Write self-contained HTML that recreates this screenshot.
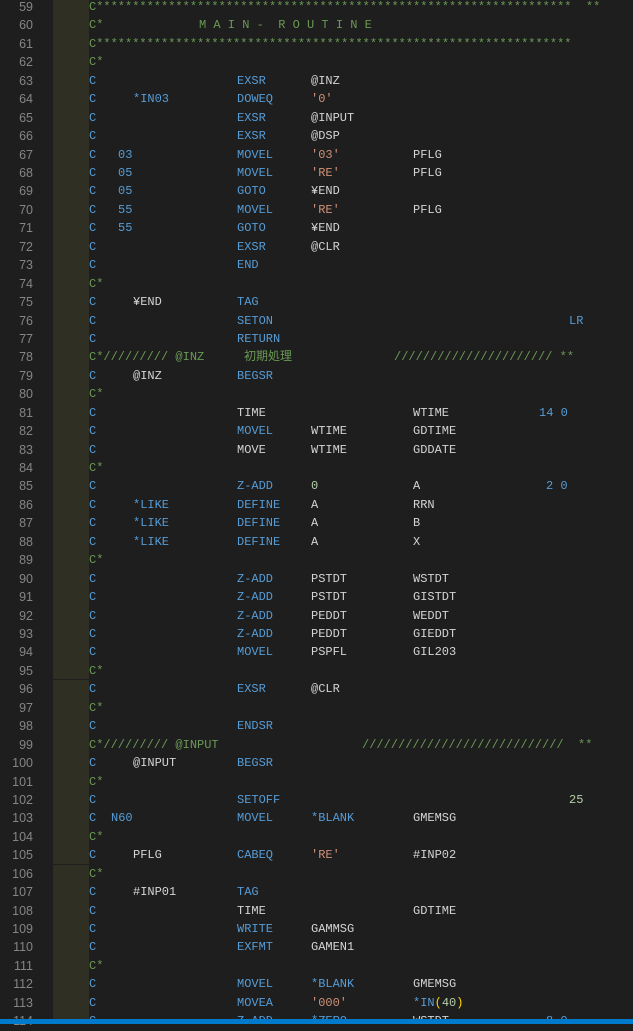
<!DOCTYPE html>
<html><head><meta charset="utf-8"><style>
body{margin:0;width:633px;height:1024px;background:#1e1e1e;overflow:hidden;position:relative;font-family:"Liberation Mono","Noto Sans CJK JP",monospace;font-size:12px}
.band{position:absolute;left:53px;top:0;width:36px;height:1020px;background:#2f2f24}
.sep{position:absolute;left:53px;width:36px;height:1px;background:#1e1e1e}
.l{position:absolute;left:0;height:18.44px;line-height:18.44px;width:633px;white-space:pre}
.l span{position:absolute;top:0}
.n{left:0;width:33px;text-align:right;color:#858585;font-family:"Liberation Sans",sans-serif;font-size:12.5px}
.b{color:#569cd6}.g{color:#6a9955}.w{color:#d4d4d4}.s{color:#ce9178}.y{color:#ffd700}.k{color:#b5cea8}
.bar{position:absolute;left:0;top:1019px;width:633px;height:5px;background:#007acc}
</style></head><body>
<div class="band"></div>
<div class="sep" style="top:679px"></div>
<div class="sep" style="top:864px"></div>
<div class="l" style="top:-2px"><span class="n">59</span><span class="g" style="left:89px">C******************************************************************  **</span></div>
<div class="l" style="top:16.4px"><span class="n">60</span><span class="g" style="left:89px">C*</span><span class="g" style="left:199px">M A I N -  R O U T I N E</span></div>
<div class="l" style="top:34.9px"><span class="n">61</span><span class="g" style="left:89px">C******************************************************************</span></div>
<div class="l" style="top:53.3px"><span class="n">62</span><span class="g" style="left:89px">C*</span></div>
<div class="l" style="top:71.8px"><span class="n">63</span><span class="b" style="left:89px">C</span><span class="b" style="left:237px">EXSR</span><span class="w" style="left:311px">@INZ</span></div>
<div class="l" style="top:90.2px"><span class="n">64</span><span class="b" style="left:89px">C</span><span class="b" style="left:133px">*IN03</span><span class="b" style="left:237px">DOWEQ</span><span class="s" style="left:311px">'0'</span></div>
<div class="l" style="top:108.6px"><span class="n">65</span><span class="b" style="left:89px">C</span><span class="b" style="left:237px">EXSR</span><span class="w" style="left:311px">@INPUT</span></div>
<div class="l" style="top:127.1px"><span class="n">66</span><span class="b" style="left:89px">C</span><span class="b" style="left:237px">EXSR</span><span class="w" style="left:311px">@DSP</span></div>
<div class="l" style="top:145.5px"><span class="n">67</span><span class="b" style="left:89px">C</span><span class="b" style="left:118px">03</span><span class="b" style="left:237px">MOVEL</span><span class="s" style="left:311px">'03'</span><span class="w" style="left:413px">PFLG</span></div>
<div class="l" style="top:164px"><span class="n">68</span><span class="b" style="left:89px">C</span><span class="b" style="left:118px">05</span><span class="b" style="left:237px">MOVEL</span><span class="s" style="left:311px">'RE'</span><span class="w" style="left:413px">PFLG</span></div>
<div class="l" style="top:182.4px"><span class="n">69</span><span class="b" style="left:89px">C</span><span class="b" style="left:118px">05</span><span class="b" style="left:237px">GOTO</span><span class="w" style="left:311px">¥END</span></div>
<div class="l" style="top:200.8px"><span class="n">70</span><span class="b" style="left:89px">C</span><span class="b" style="left:118px">55</span><span class="b" style="left:237px">MOVEL</span><span class="s" style="left:311px">'RE'</span><span class="w" style="left:413px">PFLG</span></div>
<div class="l" style="top:219.3px"><span class="n">71</span><span class="b" style="left:89px">C</span><span class="b" style="left:118px">55</span><span class="b" style="left:237px">GOTO</span><span class="w" style="left:311px">¥END</span></div>
<div class="l" style="top:237.7px"><span class="n">72</span><span class="b" style="left:89px">C</span><span class="b" style="left:237px">EXSR</span><span class="w" style="left:311px">@CLR</span></div>
<div class="l" style="top:256.2px"><span class="n">73</span><span class="b" style="left:89px">C</span><span class="b" style="left:237px">END</span></div>
<div class="l" style="top:274.6px"><span class="n">74</span><span class="g" style="left:89px">C*</span></div>
<div class="l" style="top:293px"><span class="n">75</span><span class="b" style="left:89px">C</span><span class="w" style="left:133px">¥END</span><span class="b" style="left:237px">TAG</span></div>
<div class="l" style="top:311.5px"><span class="n">76</span><span class="b" style="left:89px">C</span><span class="b" style="left:237px">SETON</span><span class="b" style="left:569px">LR</span></div>
<div class="l" style="top:329.9px"><span class="n">77</span><span class="b" style="left:89px">C</span><span class="b" style="left:237px">RETURN</span></div>
<div class="l" style="top:348.4px"><span class="n">78</span><span class="g" style="left:89px">C*///////// @INZ</span><span class="g" style="left:244px">初期処理</span><span class="g" style="left:394px">////////////////////// **</span></div>
<div class="l" style="top:366.8px"><span class="n">79</span><span class="b" style="left:89px">C</span><span class="w" style="left:133px">@INZ</span><span class="b" style="left:237px">BEGSR</span></div>
<div class="l" style="top:385.2px"><span class="n">80</span><span class="g" style="left:89px">C*</span></div>
<div class="l" style="top:403.7px"><span class="n">81</span><span class="b" style="left:89px">C</span><span class="w" style="left:237px">TIME</span><span class="w" style="left:413px">WTIME</span><span class="b" style="left:539px">14 0</span></div>
<div class="l" style="top:422.1px"><span class="n">82</span><span class="b" style="left:89px">C</span><span class="b" style="left:237px">MOVEL</span><span class="w" style="left:311px">WTIME</span><span class="w" style="left:413px">GDTIME</span></div>
<div class="l" style="top:440.6px"><span class="n">83</span><span class="b" style="left:89px">C</span><span class="w" style="left:237px">MOVE</span><span class="w" style="left:311px">WTIME</span><span class="w" style="left:413px">GDDATE</span></div>
<div class="l" style="top:459px"><span class="n">84</span><span class="g" style="left:89px">C*</span></div>
<div class="l" style="top:477.4px"><span class="n">85</span><span class="b" style="left:89px">C</span><span class="b" style="left:237px">Z-ADD</span><span class="k" style="left:311px">0</span><span class="w" style="left:413px">A</span><span class="b" style="left:546px">2 0</span></div>
<div class="l" style="top:495.9px"><span class="n">86</span><span class="b" style="left:89px">C</span><span class="b" style="left:133px">*LIKE</span><span class="b" style="left:237px">DEFINE</span><span class="w" style="left:311px">A</span><span class="w" style="left:413px">RRN</span></div>
<div class="l" style="top:514.3px"><span class="n">87</span><span class="b" style="left:89px">C</span><span class="b" style="left:133px">*LIKE</span><span class="b" style="left:237px">DEFINE</span><span class="w" style="left:311px">A</span><span class="w" style="left:413px">B</span></div>
<div class="l" style="top:532.8px"><span class="n">88</span><span class="b" style="left:89px">C</span><span class="b" style="left:133px">*LIKE</span><span class="b" style="left:237px">DEFINE</span><span class="w" style="left:311px">A</span><span class="w" style="left:413px">X</span></div>
<div class="l" style="top:551.2px"><span class="n">89</span><span class="g" style="left:89px">C*</span></div>
<div class="l" style="top:569.6px"><span class="n">90</span><span class="b" style="left:89px">C</span><span class="b" style="left:237px">Z-ADD</span><span class="w" style="left:311px">PSTDT</span><span class="w" style="left:413px">WSTDT</span></div>
<div class="l" style="top:588.1px"><span class="n">91</span><span class="b" style="left:89px">C</span><span class="b" style="left:237px">Z-ADD</span><span class="w" style="left:311px">PSTDT</span><span class="w" style="left:413px">GISTDT</span></div>
<div class="l" style="top:606.5px"><span class="n">92</span><span class="b" style="left:89px">C</span><span class="b" style="left:237px">Z-ADD</span><span class="w" style="left:311px">PEDDT</span><span class="w" style="left:413px">WEDDT</span></div>
<div class="l" style="top:625px"><span class="n">93</span><span class="b" style="left:89px">C</span><span class="b" style="left:237px">Z-ADD</span><span class="w" style="left:311px">PEDDT</span><span class="w" style="left:413px">GIEDDT</span></div>
<div class="l" style="top:643.4px"><span class="n">94</span><span class="b" style="left:89px">C</span><span class="b" style="left:237px">MOVEL</span><span class="w" style="left:311px">PSPFL</span><span class="w" style="left:413px">GIL203</span></div>
<div class="l" style="top:661.8px"><span class="n">95</span><span class="g" style="left:89px">C*</span></div>
<div class="l" style="top:680.3px"><span class="n">96</span><span class="b" style="left:89px">C</span><span class="b" style="left:237px">EXSR</span><span class="w" style="left:311px">@CLR</span></div>
<div class="l" style="top:698.7px"><span class="n">97</span><span class="g" style="left:89px">C*</span></div>
<div class="l" style="top:717.2px"><span class="n">98</span><span class="b" style="left:89px">C</span><span class="b" style="left:237px">ENDSR</span></div>
<div class="l" style="top:735.6px"><span class="n">99</span><span class="g" style="left:89px">C*///////// @INPUT</span><span class="g" style="left:362px">////////////////////////////  **</span></div>
<div class="l" style="top:754px"><span class="n">100</span><span class="b" style="left:89px">C</span><span class="w" style="left:133px">@INPUT</span><span class="b" style="left:237px">BEGSR</span></div>
<div class="l" style="top:772.5px"><span class="n">101</span><span class="g" style="left:89px">C*</span></div>
<div class="l" style="top:790.9px"><span class="n">102</span><span class="b" style="left:89px">C</span><span class="b" style="left:237px">SETOFF</span><span class="k" style="left:569px">25</span></div>
<div class="l" style="top:809.4px"><span class="n">103</span><span class="b" style="left:89px">C</span><span class="b" style="left:111px">N60</span><span class="b" style="left:237px">MOVEL</span><span class="b" style="left:311px">*BLANK</span><span class="w" style="left:413px">GMEMSG</span></div>
<div class="l" style="top:827.8px"><span class="n">104</span><span class="g" style="left:89px">C*</span></div>
<div class="l" style="top:846.2px"><span class="n">105</span><span class="b" style="left:89px">C</span><span class="w" style="left:133px">PFLG</span><span class="b" style="left:237px">CABEQ</span><span class="s" style="left:311px">'RE'</span><span class="w" style="left:413px">#INP02</span></div>
<div class="l" style="top:864.7px"><span class="n">106</span><span class="g" style="left:89px">C*</span></div>
<div class="l" style="top:883.1px"><span class="n">107</span><span class="b" style="left:89px">C</span><span class="w" style="left:133px">#INP01</span><span class="b" style="left:237px">TAG</span></div>
<div class="l" style="top:901.6px"><span class="n">108</span><span class="b" style="left:89px">C</span><span class="w" style="left:237px">TIME</span><span class="w" style="left:413px">GDTIME</span></div>
<div class="l" style="top:920px"><span class="n">109</span><span class="b" style="left:89px">C</span><span class="b" style="left:237px">WRITE</span><span class="w" style="left:311px">GAMMSG</span></div>
<div class="l" style="top:938.4px"><span class="n">110</span><span class="b" style="left:89px">C</span><span class="b" style="left:237px">EXFMT</span><span class="w" style="left:311px">GAMEN1</span></div>
<div class="l" style="top:956.9px"><span class="n">111</span><span class="g" style="left:89px">C*</span></div>
<div class="l" style="top:975.3px"><span class="n">112</span><span class="b" style="left:89px">C</span><span class="b" style="left:237px">MOVEL</span><span class="b" style="left:311px">*BLANK</span><span class="w" style="left:413px">GMEMSG</span></div>
<div class="l" style="top:993.8px"><span class="n">113</span><span class="b" style="left:89px">C</span><span class="b" style="left:237px">MOVEA</span><span class="s" style="left:311px">'000'</span><span style="left:413px"><span class="b" style="position:static">*IN</span><span class="y" style="position:static">(</span><span class="k" style="position:static">40</span><span class="y" style="position:static">)</span></span></div>
<div class="l" style="top:1012.2px"><span class="n">114</span><span class="b" style="left:89px">C</span><span class="b" style="left:237px">Z-ADD</span><span class="b" style="left:311px">*ZERO</span><span class="w" style="left:413px">WSTDT</span><span class="b" style="left:546px">8 0</span></div>
<div class="bar"></div>
</body></html>
